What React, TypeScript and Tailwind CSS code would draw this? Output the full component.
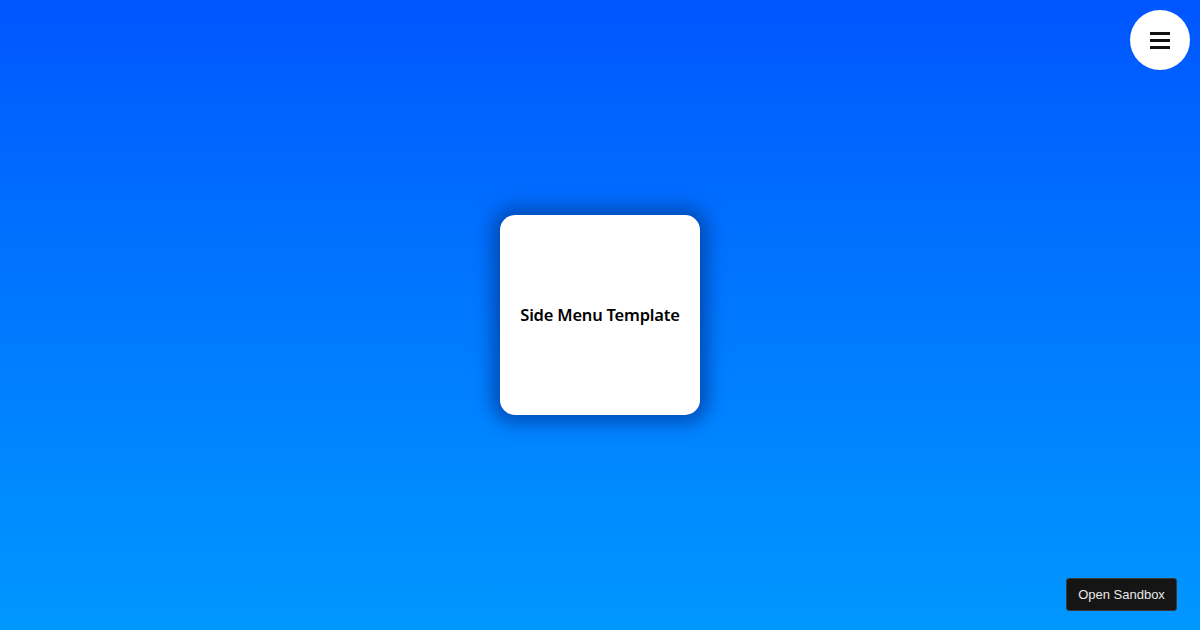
export default function App() {
  return (
    <div className="relative flex h-[630px] w-full items-center justify-center bg-gradient-to-b from-[#0055ff] to-[#0097ff] font-['Inter',sans-serif]">
      <button
        type="button"
        className="absolute right-[10px] top-[10px] flex h-[60px] w-[60px] flex-col items-center justify-center gap-[4px] rounded-full bg-white"
      >
        <span className="block h-[3px] w-[20px] bg-[#111]" />
        <span className="block h-[3px] w-[20px] bg-[#111]" />
        <span className="block h-[3px] w-[20px] bg-[#111]" />
      </button>

      <div className="flex h-[200px] w-[200px] items-center justify-center rounded-[15px] bg-white shadow-[0_0_18px_8px_rgba(0,72,175,0.9)]">
        <span className="font-['Noto_Sans',sans-serif] text-[16.5px] font-semibold tracking-[-0.2px] text-black">
          Side Menu Template
        </span>
      </div>

      <button
        type="button"
        className="absolute bottom-[19px] right-[23px] flex h-[33px] w-[111px] items-center justify-center rounded-[3px] border border-[#3a3a3a] bg-[#151515] text-[13px] text-[#e8e8e8] font-['Liberation_Sans',sans-serif]"
      >
        Open Sandbox
      </button>
    </div>
  );
}
